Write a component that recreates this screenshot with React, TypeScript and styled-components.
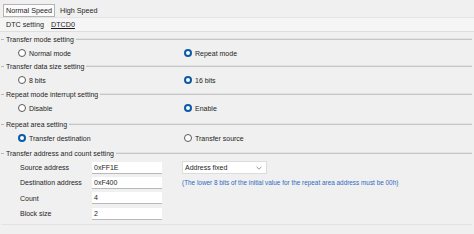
import React from "react";
import styled, { createGlobalStyle } from "styled-components";

const Global = createGlobalStyle`
  html, body { margin: 0; padding: 0; background: #f0f0f0; }
  body { width: 474px; height: 234px; overflow: hidden; font-family: "Liberation Sans", Arial, sans-serif; font-size: 7px; color: #1e1e1e; }
`;

const Page = styled.div`
  width: 474px;
  height: 234px;
  background: #f0f0f0;
  display: flex;
  flex-direction: column;
`;

const TabStrip = styled.div`
  height: 17px;
  display: flex;
  align-items: flex-end;
  padding-left: 3px;
  gap: 2px;
  box-sizing: border-box;
`;

const Tab = styled.div<{ $active?: boolean }>`
  height: 13px;
  padding: 0 2px;
  display: flex;
  align-items: center;
  box-sizing: border-box;
  background: ${(p) => (p.$active ? "#fbfbfb" : "transparent")};
  border: 1px solid ${(p) => (p.$active ? "#b4b4b4" : "transparent")};
  font-size: 7.2px;
`;

const SubStrip = styled.div`
  height: 13px;
  display: flex;
  align-items: center;
  padding-left: 6px;
  gap: 7px;
  background: #f5f5f5;
  border-top: 1px solid #e4e4e4;
  border-bottom: 1px solid #dedede;
`;

const SubTab = styled.span<{ $active?: boolean }>`
  font-size: 7.2px;
  text-decoration: ${(p) => (p.$active ? "underline" : "none")};
`;

const Panel = styled.div`
  display: flex;
  flex-direction: column;
  padding: 2px 2px 0 1px;
`;

const Group = styled.div<{ $h: number }>`
  height: ${(p) => p.$h}px;
  display: flex;
  flex-direction: column;
  box-sizing: border-box;
`;

const GroupHead = styled.div`
  height: 10px;
  display: flex;
  align-items: center;
  gap: 2px;
`;

const Dash = styled.div`
  width: 3px;
  height: 1px;
  background: #b8b8b8;
`;

const GroupTitle = styled.span`
  white-space: nowrap;
`;

const Rule = styled.div`
  flex: 1;
  height: 1px;
  background: #c6c6c6;
  box-shadow: 0 -1px 0 #e2e2e2;
  margin-top: 1px;
`;

const RadioRow = styled.div`
  height: 14px;
  margin-top: 2px;
  display: grid;
  grid-template-columns: 166px 1fr;
  padding-left: 17px;
  align-items: center;
`;

const RadioItem = styled.label`
  display: flex;
  align-items: center;
  gap: 3px;
`;

const RadioDot = styled.span<{ $on?: boolean }>`
  width: 8px;
  height: 8px;
  border-radius: 50%;
  box-sizing: border-box;
  background: #ffffff;
  border: ${(p) => (p.$on ? "2.5px solid #0a5aa8" : "1px solid #5a5a5a")};
`;

const Fields = styled.div`
  display: flex;
  flex-direction: column;
  padding-top: 2px;
`;

const FieldRow = styled.div`
  height: 15.3px;
  display: grid;
  grid-template-columns: 72px 70px 20px auto;
  padding-left: 19px;
  align-items: center;
`;

const Input = styled.div`
  height: 12px;
  background: #ffffff;
  border-bottom: 1px solid #b9b9b9;
  box-sizing: border-box;
  display: flex;
  align-items: center;
  padding-left: 2px;
`;

const Select = styled.div`
  width: 85px;
  height: 13px;
  background: #ffffff;
  border: 1px solid #dcdcdc;
  box-sizing: border-box;
  display: flex;
  align-items: center;
  justify-content: space-between;
  padding: 0 4px 0 2px;
`;

const Note = styled.span`
  color: #2f6ac0;
  white-space: nowrap;
  font-size: 6.4px;
`;

const Chevron = () => (
  <svg width="6" height="4" viewBox="0 0 6 4">
    <path d="M0.5 0.8 L3 3.2 L5.5 0.8" fill="none" stroke="#808080" strokeWidth="0.8" />
  </svg>
);

const BottomLine = styled.div`
  height: 1px;
  margin-top: 3px;
  background: #e2e2e2;
`;

type G = { title: string; a: string; b: string; on: 0 | 1; h: number };

const groups: G[] = [
  { title: "Transfer mode setting", a: "Normal mode", b: "Repeat mode", on: 1, h: 27 },
  { title: "Transfer data size setting", a: "8 bits", b: "16 bits", on: 1, h: 28 },
  { title: "Repeat mode interrupt setting", a: "Disable", b: "Enable", on: 1, h: 30 },
  { title: "Repeat area setting", a: "Transfer destination", b: "Transfer source", on: 0, h: 29 },
];

const fields = [
  { label: "Source address", value: "0xFF1E" },
  { label: "Destination address", value: "0xF400" },
  { label: "Count", value: "4" },
  { label: "Block size", value: "2" },
];

export default function App() {
  return (
    <Page>
      <Global />
      <TabStrip>
        <Tab $active>Normal Speed</Tab>
        <Tab>High Speed</Tab>
      </TabStrip>
      <SubStrip>
        <SubTab>DTC setting</SubTab>
        <SubTab $active>DTCD0</SubTab>
      </SubStrip>
      <Panel>
        {groups.map((g) => (
          <Group key={g.title} $h={g.h}>
            <GroupHead>
              <Dash />
              <GroupTitle>{g.title}</GroupTitle>
              <Rule />
            </GroupHead>
            <RadioRow>
              <RadioItem>
                <RadioDot $on={g.on === 0} />
                {g.a}
              </RadioItem>
              <RadioItem>
                <RadioDot $on={g.on === 1} />
                {g.b}
              </RadioItem>
            </RadioRow>
          </Group>
        ))}
        <Group $h={82}>
          <GroupHead>
            <Dash />
            <GroupTitle>Transfer address and count setting</GroupTitle>
            <Rule />
          </GroupHead>
          <Fields>
            {fields.map((f, i) => (
              <FieldRow key={f.label}>
                <span>{f.label}</span>
                <Input>{f.value}</Input>
                <span />
                {i === 0 ? (
                  <Select>
                    <span>Address fixed</span>
                    <Chevron />
                  </Select>
                ) : i === 1 ? (
                  <Note>(The lower 8 bits of the initial value for the repeat area address must be 00h)</Note>
                ) : (
                  <span />
                )}
              </FieldRow>
            ))}
          </Fields>
          <BottomLine />
        </Group>
      </Panel>
    </Page>
  );
}
